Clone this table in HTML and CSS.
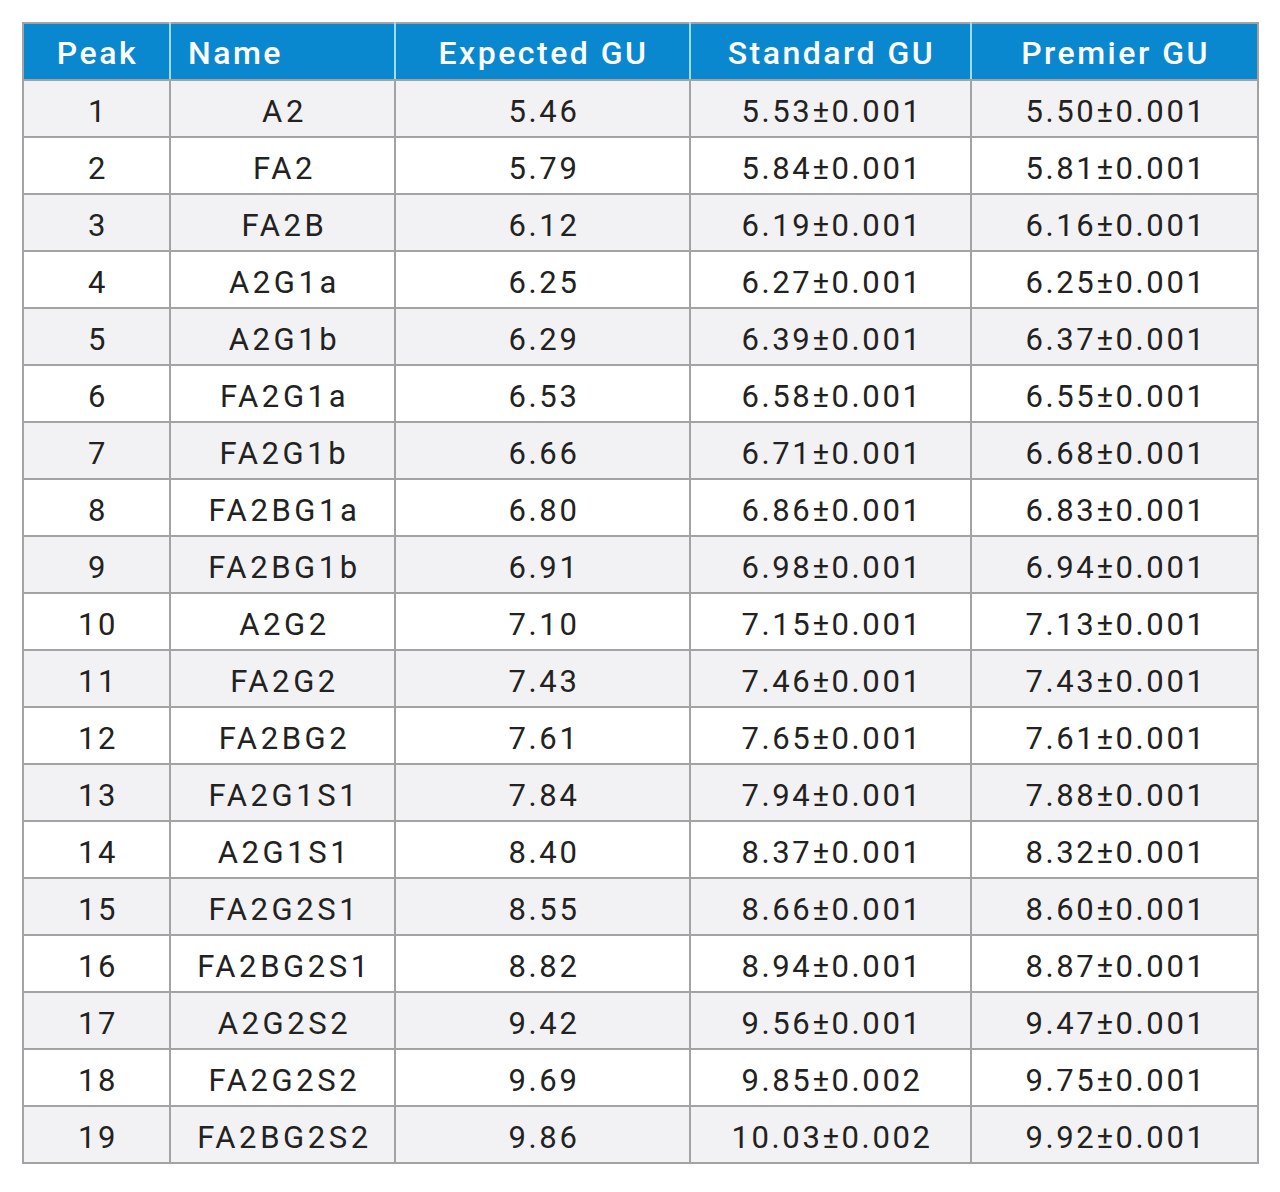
FILE: index.html
```html
<!DOCTYPE html>
<html>
<head>
<meta charset="utf-8">
<link rel="stylesheet" href="styles.css">
</head>
<body>
<table class="gu-table">
  <colgroup>
    <col class="c-peak"><col class="c-name"><col class="c-exp"><col class="c-std"><col class="c-prem">
  </colgroup>
  <thead>
    <tr><th>Peak</th><th class="left">Name</th><th>Expected GU</th><th>Standard GU</th><th>Premier GU</th></tr>
  </thead>
  <tbody>
    <tr><td>1</td><td class="nm">A2</td><td>5.46</td><td>5.53±0.001</td><td>5.50±0.001</td></tr>
    <tr><td>2</td><td class="nm">FA2</td><td>5.79</td><td>5.84±0.001</td><td>5.81±0.001</td></tr>
    <tr><td>3</td><td class="nm">FA2B</td><td>6.12</td><td>6.19±0.001</td><td>6.16±0.001</td></tr>
    <tr><td>4</td><td class="nm">A2G1a</td><td>6.25</td><td>6.27±0.001</td><td>6.25±0.001</td></tr>
    <tr><td>5</td><td class="nm">A2G1b</td><td>6.29</td><td>6.39±0.001</td><td>6.37±0.001</td></tr>
    <tr><td>6</td><td class="nm">FA2G1a</td><td>6.53</td><td>6.58±0.001</td><td>6.55±0.001</td></tr>
    <tr><td>7</td><td class="nm">FA2G1b</td><td>6.66</td><td>6.71±0.001</td><td>6.68±0.001</td></tr>
    <tr><td>8</td><td class="nm">FA2BG1a</td><td>6.80</td><td>6.86±0.001</td><td>6.83±0.001</td></tr>
    <tr><td>9</td><td class="nm">FA2BG1b</td><td>6.91</td><td>6.98±0.001</td><td>6.94±0.001</td></tr>
    <tr><td>10</td><td class="nm">A2G2</td><td>7.10</td><td>7.15±0.001</td><td>7.13±0.001</td></tr>
    <tr><td>11</td><td class="nm">FA2G2</td><td>7.43</td><td>7.46±0.001</td><td>7.43±0.001</td></tr>
    <tr><td>12</td><td class="nm">FA2BG2</td><td>7.61</td><td>7.65±0.001</td><td>7.61±0.001</td></tr>
    <tr><td>13</td><td class="nm">FA2G1S1</td><td>7.84</td><td>7.94±0.001</td><td>7.88±0.001</td></tr>
    <tr><td>14</td><td class="nm">A2G1S1</td><td>8.40</td><td>8.37±0.001</td><td>8.32±0.001</td></tr>
    <tr><td>15</td><td class="nm">FA2G2S1</td><td>8.55</td><td>8.66±0.001</td><td>8.60±0.001</td></tr>
    <tr><td>16</td><td class="nm">FA2BG2S1</td><td>8.82</td><td>8.94±0.001</td><td>8.87±0.001</td></tr>
    <tr><td>17</td><td class="nm">A2G2S2</td><td>9.42</td><td>9.56±0.001</td><td>9.47±0.001</td></tr>
    <tr><td>18</td><td class="nm">FA2G2S2</td><td>9.69</td><td>9.85±0.002</td><td>9.75±0.001</td></tr>
    <tr><td>19</td><td class="nm">FA2BG2S2</td><td>9.86</td><td>10.03±0.002</td><td>9.92±0.001</td></tr>
  </tbody>
</table>
</body>
</html>
```
FILE: styles.css
```css
html, body {
  margin: 0;
  padding: 0;
  background: #ffffff;
}
body {
  padding: 22px 0 0 22px;
  font-family: "Roboto", "Inter", "Liberation Sans", sans-serif;
}
.gu-table {
  border-collapse: collapse;
  table-layout: fixed;
  width: 1235px;
  border: 2px solid #a3a3a3;
}
.c-peak { width: 147px; }
.c-name { width: 225px; }
.c-exp { width: 295px; }
.c-std { width: 281px; }
.c-prem { width: 287px; }
.gu-table th {
  background: #0a88cf;
  color: #ffffff;
  font-weight: 500;
  font-size: 32px;
  height: 57px;
  padding: 3px 0 0 2px;
  box-sizing: border-box;
  text-align: center;
  border: 2px solid #a3a3a3;
  border-left: 2px solid #9fdcf5;
  border-right: 2px solid #9fdcf5;
  letter-spacing: 2.5px;
}
.gu-table th:first-child { border-left-color: #a3a3a3; }
.gu-table th:last-child { border-right-color: #a3a3a3; }
.gu-table th.left {
  text-align: left;
  padding-left: 17px;
}
.gu-table td {
  height: 57px;
  padding: 5px 0 0 3px;
  box-sizing: border-box;
  text-align: center;
  font-size: 31px;
  color: #222222;
  border: 2px solid #a3a3a3;
  letter-spacing: 2.6px;
}
.gu-table td.nm {
  letter-spacing: 3.6px;
  padding-left: 4px;
}
.gu-table tbody tr:nth-child(odd) td { background: #f2f2f4; }
.gu-table tbody tr:nth-child(even) td { background: #ffffff; }
```
